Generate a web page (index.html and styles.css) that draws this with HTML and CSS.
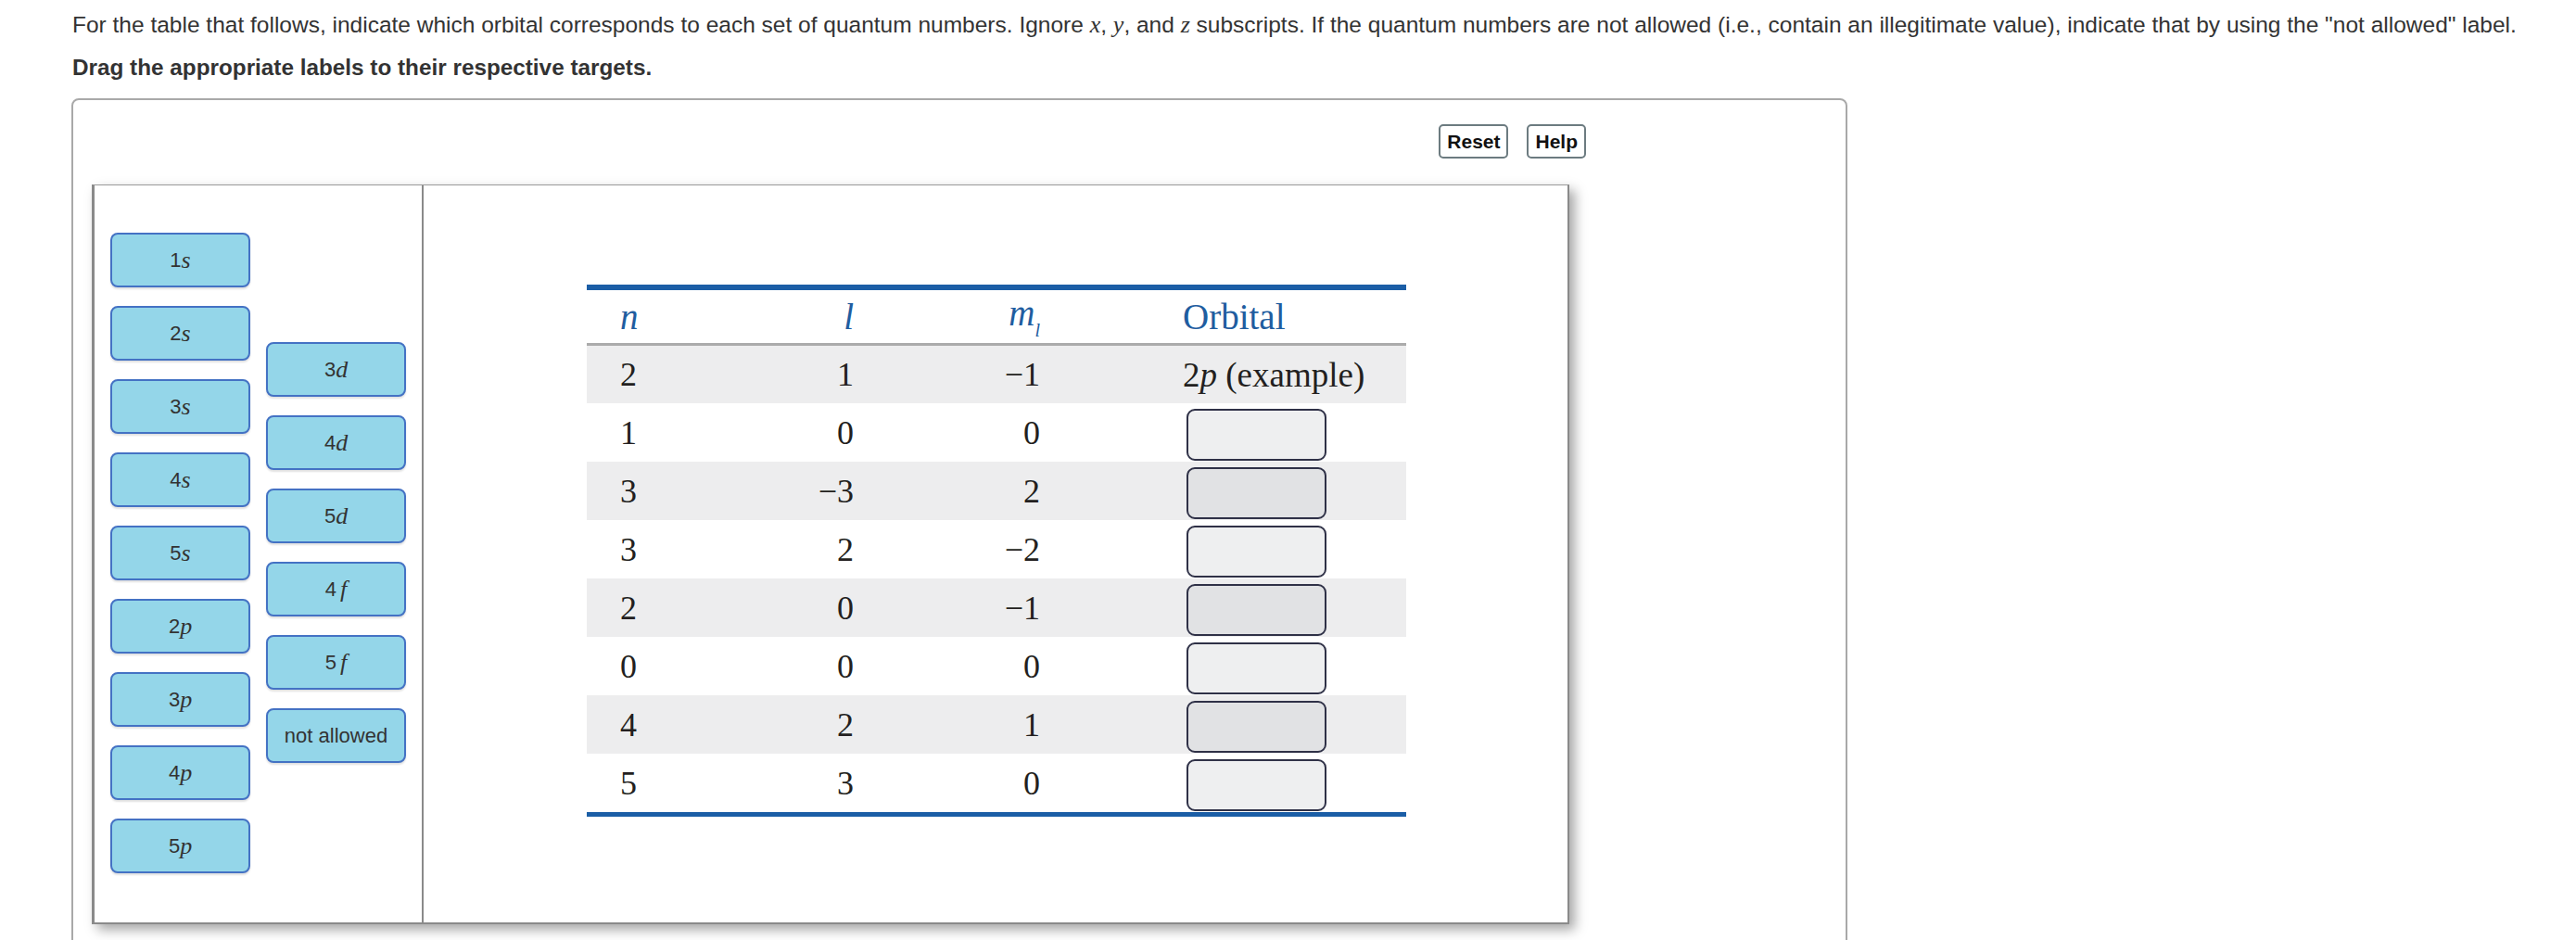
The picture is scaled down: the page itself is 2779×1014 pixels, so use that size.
FILE: index.html
```html
<!DOCTYPE html>
<html lang="en">
<head>
<meta charset="utf-8">
<title>Orbitals and quantum numbers</title>
<link rel="stylesheet" href="styles.css">
</head>
<body>
<div class="page">
  <p class="prompt">For the table that follows, indicate which orbital corresponds to each set of quantum numbers. Ignore <i class="mv">x</i>, <i class="mv">y</i>, and <i class="mv">z</i> subscripts. If the quantum numbers are not allowed (i.e., contain an illegitimate value), indicate that by using the "not allowed" label.</p>
  <p class="instr">Drag the appropriate labels to their respective targets.</p>

  <div class="widget">
    <div class="toolbar">
      <button class="btn">Reset</button>
      <button class="btn">Help</button>
    </div>

    <div class="panel">
      <div class="labels">
        <div class="col">
          <div class="label">1<i class="v">s</i></div>
          <div class="label">2<i class="v">s</i></div>
          <div class="label">3<i class="v">s</i></div>
          <div class="label">4<i class="v">s</i></div>
          <div class="label">5<i class="v">s</i></div>
          <div class="label">2<i class="v">p</i></div>
          <div class="label">3<i class="v">p</i></div>
          <div class="label">4<i class="v">p</i></div>
          <div class="label">5<i class="v">p</i></div>
        </div>
        <div class="col col-b">
          <div class="label">3<i class="v">d</i></div>
          <div class="label">4<i class="v">d</i></div>
          <div class="label">5<i class="v">d</i></div>
          <div class="label">4<i class="v vf">f</i></div>
          <div class="label">5<i class="v vf">f</i></div>
          <div class="label">not allowed</div>
        </div>
      </div>

      <div class="stage">
        <table class="qt">
          <thead>
            <tr>
              <th class="c1"><i>n</i></th>
              <th class="c2"><i>l</i></th>
              <th class="c3"><i>m</i><sub><i>l</i></sub></th>
              <th class="c4">Orbital</th>
            </tr>
          </thead>
          <tbody>
            <tr class="sh"><td class="c1">2</td><td class="c2">1</td><td class="c3">−1</td><td class="c4 ex">2<i>p</i> (example)</td></tr>
            <tr><td class="c1">1</td><td class="c2">0</td><td class="c3">0</td><td class="c4 dz"><div class="drop"></div></td></tr>
            <tr class="sh"><td class="c1">3</td><td class="c2">−3</td><td class="c3">2</td><td class="c4 dz"><div class="drop"></div></td></tr>
            <tr><td class="c1">3</td><td class="c2">2</td><td class="c3">−2</td><td class="c4 dz"><div class="drop"></div></td></tr>
            <tr class="sh"><td class="c1">2</td><td class="c2">0</td><td class="c3">−1</td><td class="c4 dz"><div class="drop"></div></td></tr>
            <tr><td class="c1">0</td><td class="c2">0</td><td class="c3">0</td><td class="c4 dz"><div class="drop"></div></td></tr>
            <tr class="sh"><td class="c1">4</td><td class="c2">2</td><td class="c3">1</td><td class="c4 dz"><div class="drop"></div></td></tr>
            <tr class="last"><td class="c1">5</td><td class="c2">3</td><td class="c3">0</td><td class="c4 dz"><div class="drop"></div></td></tr>
          </tbody>
        </table>
      </div>
    </div>
  </div>
</div>
</body>
</html>
```

FILE: styles.css
```css
html, body {
  margin: 0;
  padding: 0;
  background: #ffffff;
}

body {
  height: 1014px;
  overflow: hidden;
  font-family: "Liberation Sans", Arial, sans-serif;
  color: #333333;
}

.page {
  padding-left: 78px;
}

.prompt {
  margin: 13px 0 0 0;
  font-size: 24.5px;
  line-height: 28px;
  white-space: nowrap;
}

.mv {
  font-family: "Liberation Serif", "Times New Roman", serif;
  font-style: italic;
  font-size: 26px;
}

.instr {
  margin: 18px 0 0 0;
  font-size: 24.3px;
  line-height: 28px;
  font-weight: bold;
}

.widget {
  margin: 19px 0 0 -1px;
  width: 1912px;
  border: 2px solid #a9a9a9;
  border-radius: 8px;
  padding-bottom: 60px;
}

.toolbar {
  display: flex;
  justify-content: flex-end;
  gap: 20px;
  width: 1632px;
  margin-top: 26px;
}

.btn {
  height: 37px;
  padding: 0 7px;
  border: 2px solid #6c7b80;
  border-radius: 5px;
  background: #ffffff;
  font-family: "Liberation Sans", Arial, sans-serif;
  font-weight: bold;
  font-size: 21px;
  color: #111111;
}

.panel {
  display: flex;
  margin: 28px 0 0 20px;
  width: 1589px;
  height: 795px;
  border-top: 1px solid #9a9a9a;
  border-left: 3px solid #8a8a8a;
  border-right: 2px solid #8a8a8a;
  border-bottom: 2px solid #8a8a8a;
  box-shadow: 6px 6px 12px rgba(0, 0, 0, 0.35);
  background: #ffffff;
}

.labels {
  display: flex;
  gap: 17px;
  width: 336px;
  padding: 51px 0 0 17px;
  border-right: 2px solid #8a8a8a;
}

.col {
  display: flex;
  flex-direction: column;
  gap: 20px;
}

.col-b {
  margin-top: 118px;
}

.label {
  box-sizing: border-box;
  width: 151px;
  height: 59px;
  display: flex;
  align-items: center;
  justify-content: center;
  background: #94d6e9;
  border: 2px solid #4472c4;
  border-radius: 8px;
  box-shadow: 0 2px 2px rgba(0, 0, 0, 0.12);
  font-size: 22px;
  color: #333333;
}

.v {
  font-family: "Liberation Serif", "Times New Roman", serif;
  font-style: italic;
  font-size: 26px;
}

.vf {
  margin-left: 4px;
}

.stage {
  flex: 1;
  padding: 107px 0 0 176px;
}

.qt {
  border-collapse: separate;
  border-spacing: 0;
  width: 884px;
  font-family: "Liberation Serif", "Times New Roman", serif;
  font-size: 36px;
  color: #231f20;
}

.qt th {
  height: 57px;
  padding: 0;
  border-top: 6px solid #1b5ea6;
  border-bottom: 3px solid #ababab;
  font-weight: normal;
  font-size: 39px;
  color: #1f5da0;
  vertical-align: middle;
  line-height: 1;
}

.qt th sub {
  font-size: 20px;
  vertical-align: -12px;
}

.qt td {
  height: 62px;
  padding: 0;
  vertical-align: middle;
  line-height: 1;
}

.qt tr.sh td {
  background: #ededee;
}

.qt tr.last td {
  border-bottom: 5px solid #1b5ea6;
}

.c1 {
  width: 131px;
  padding-left: 36px !important;
  text-align: left;
}

.c2 {
  width: 121px;
  text-align: right;
  padding-right: 20px !important;
}

.c3 {
  width: 181px;
  text-align: right;
  padding-right: 20px !important;
}

.c4 {
  text-align: left;
  padding-left: 134px !important;
}

.ex {
  font-size: 37px;
}

.qt td.dz {
  vertical-align: bottom;
  padding-bottom: 1px !important;
}

.drop {
  box-sizing: border-box;
  width: 151px;
  height: 56px;
  margin-left: 4px;
  border: 2px solid #2f3147;
  border-radius: 9px;
  background: rgba(200, 203, 206, 0.3);
}
```
